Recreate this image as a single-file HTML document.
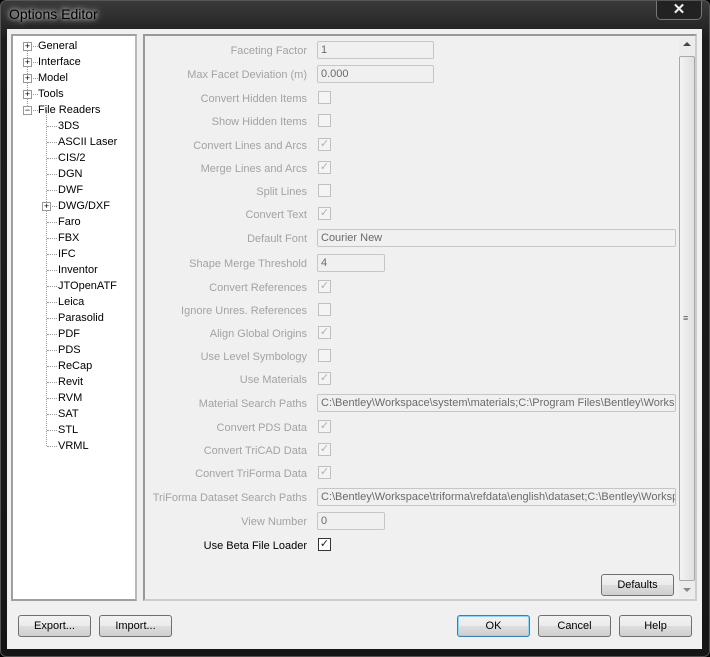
<!DOCTYPE html><html><head><style>
body{margin:0;width:710px;height:657px;background:#000;font-family:"Liberation Sans",sans-serif;font-size:12px;overflow:hidden;position:relative}
.a{position:absolute}
.frame{left:0;top:0;width:708px;height:655px;border:1px solid #555;border-radius:6px;background:linear-gradient(#3a3a3a,#1c1c1c 40px,#151515);}
.title{left:9px;top:6px;color:#000;font-size:14px;text-shadow:0 0 8px #ddd,0 0 4px #ddd}
.close{left:656px;top:1px;width:44px;height:18px;border:1px solid #777;border-top:none;border-radius:0 0 5px 5px;background:#222;color:#eee;text-align:center;font-weight:bold;font-size:15px;line-height:18px}
.client{left:7px;top:29px;width:695px;height:620px;background:#f0f0f0}
.tree{left:11px;top:34px;width:122px;height:563px;border:2px solid #a0a0a0;background:#fff;border-right-color:#b8b8b8}
.ti{position:absolute;color:#000;font-size:11px;line-height:16px;white-space:nowrap}
.pm{position:absolute;width:7px;height:7px;border:1px solid #999;background:#fff;font-size:9px;line-height:7px;text-align:center;color:#000}
.dv{position:absolute;border-left:1px dotted #999}
.dh{position:absolute;border-top:1px dotted #999;width:8px}
.panel{left:143px;top:34px;width:550px;height:563px;border:2px solid #999;border-right-color:#ccc;border-bottom-color:#ccc;background:#f0f0f0}
.lb{position:absolute;right:388px;color:#a3a3a3;white-space:nowrap;line-height:14px;font-size:11px}
.cb{position:absolute;left:317px;width:11px;height:11px;border:1px solid #c0c0c0;background:#f4f4f4;color:#b0b0b0;font-size:11px;line-height:11px;text-align:center}
.tb{position:absolute;left:316px;height:18px;border:1px solid #c6c6c6;border-radius:2px;background:#f0f0f0;color:#6a6a6a;line-height:17px;padding-left:3px;white-space:nowrap;overflow:hidden;box-sizing:border-box;font-size:11px}
.btn{position:absolute;height:22px;border:1px solid #707070;border-radius:3px;background:linear-gradient(#f2f2f2,#ebebeb 50%,#dddddd 51%,#cfcfcf);text-align:center;line-height:21px;color:#000;box-sizing:border-box;font-size:11px}
.sb{left:679px;top:37px;width:16px;height:561px;background:#ececec}
</style></head><body>
<div class="a frame"></div>
<div class="a title">Options Editor</div>
<div class="a close">✕</div>
<div class="a client"></div>
<div class="a tree">
<div style="position:absolute;left:0;top:1px;width:100%;height:100%">
<div class="dv" style="left:14px;top:9px;height:64px"></div>
<div class="dv" style="left:33px;top:73px;height:336px"></div>
<div class="pm" style="left:10px;top:5px">+</div><div class="dh" style="left:20px;top:9px;width:5px"></div><div class="ti" style="left:25px;top:1px">General</div>
<div class="pm" style="left:10px;top:21px">+</div><div class="dh" style="left:20px;top:25px;width:5px"></div><div class="ti" style="left:25px;top:17px">Interface</div>
<div class="pm" style="left:10px;top:37px">+</div><div class="dh" style="left:20px;top:41px;width:5px"></div><div class="ti" style="left:25px;top:33px">Model</div>
<div class="pm" style="left:10px;top:53px">+</div><div class="dh" style="left:20px;top:57px;width:5px"></div><div class="ti" style="left:25px;top:49px">Tools</div>
<div class="pm" style="left:10px;top:69px">−</div><div class="dh" style="left:20px;top:73px;width:5px"></div><div class="ti" style="left:25px;top:65px">File Readers</div>
<div id="fr"></div>
</div>
<script>
var n=["3DS","ASCII Laser","CIS/2","DGN","DWF","DWG/DXF","Faro","FBX","IFC","Inventor","JTOpenATF","Leica","Parasolid","PDF","PDS","ReCap","Revit","RVM","SAT","STL","VRML"],h="";
n.forEach(function(t,i){var y=81+i*16;h+='<div class="dh" style="left:34px;top:'+(y+8)+'px;width:10px"></div><div class="ti" style="left:45px;top:'+y+'px">'+t+'</div>';if(t=="DWG/DXF")h+='<div class="pm" style="left:29px;top:'+(y+4)+'px">+</div>';});
document.getElementById("fr").innerHTML=h;
</script>
</div>
<div class="a panel">
<div id="rows"></div>
<div class="btn" style="left:456px;top:538px;width:73px">Defaults</div>
</div>
<div class="a sb"><div class="a" style="left:4px;top:5px;border:4px solid transparent;border-bottom:4px solid #444;border-top:none"></div>
<div class="a" style="left:0;top:19px;width:14px;height:523px;border:1px solid #a8a8a8;border-radius:2px;background:linear-gradient(90deg,#f3f3f3,#e0e0e0)"></div>
<div class="a" style="left:4px;top:276px;font-size:9px;color:#555">≡</div>
<div class="a" style="left:4px;top:551px;border:4px solid transparent;border-top:4px solid #888;border-bottom:none"></div></div>
<script>
var R=[["Faceting Factor","t","1",117],["Max Facet Deviation (m)","t","0.000",117],["Convert Hidden Items","c",0],["Show Hidden Items","c",0],["Convert Lines and Arcs","c",1],["Merge Lines and Arcs","c",1],["Split Lines","c",0],["Convert Text","c",1],["Default Font","t","Courier New",359],["Shape Merge Threshold","t","4",68],["Convert References","c",1],["Ignore Unres. References","c",0],["Align Global Origins","c",1],["Use Level Symbology","c",0],["Use Materials","c",1],["Material Search Paths","t","C:\\Bentley\\Workspace\\system\\materials;C:\\Program Files\\Bentley\\Workspace",359],["Convert PDS Data","c",1],["Convert TriCAD Data","c",1],["Convert TriForma Data","c",1],["TriForma Dataset Search Paths","t","C:\\Bentley\\Workspace\\triforma\\refdata\\english\\dataset;C:\\Bentley\\Workspace",359],["View Number","t","0",68],["Use Beta File Loader","c",2]];
var Y=[50,74,98,121,145,168,191,214,238,263,287,310,333,356,379,403,427,450,473,497,521,545],h="";
R.forEach(function(r,i){var y=Y[i]-35;var st=i==21?'color:#000':'';h+='<div class="lb" style="top:'+(y-7)+'px;'+st+'">'+r[0]+'</div>';
if(r[1]=="t")h+='<div class="tb" style="top:'+(y-10)+'px;width:'+r[3]+'px;left:172px">'+r[2]+'</div>';
else{var cs=r[2]==2?'border-color:#333;background:#fff;color:#222':'';h+='<div class="cb" style="left:173px;top:'+(y-8)+'px;'+cs+'">'+(r[2]?'✓':'')+'</div>';}});
document.getElementById("rows").innerHTML=h;
</script>
<div class="btn" style="left:18px;top:615px;width:73px">Export...</div>
<div class="btn" style="left:99px;top:615px;width:73px">Import...</div>
<div class="btn" style="left:457px;top:615px;width:73px;border-color:#3c7fb1;box-shadow:inset 0 0 0 1px #8fd3f5">OK</div>
<div class="btn" style="left:538px;top:615px;width:73px">Cancel</div>
<div class="btn" style="left:619px;top:615px;width:73px">Help</div>
</body></html>
